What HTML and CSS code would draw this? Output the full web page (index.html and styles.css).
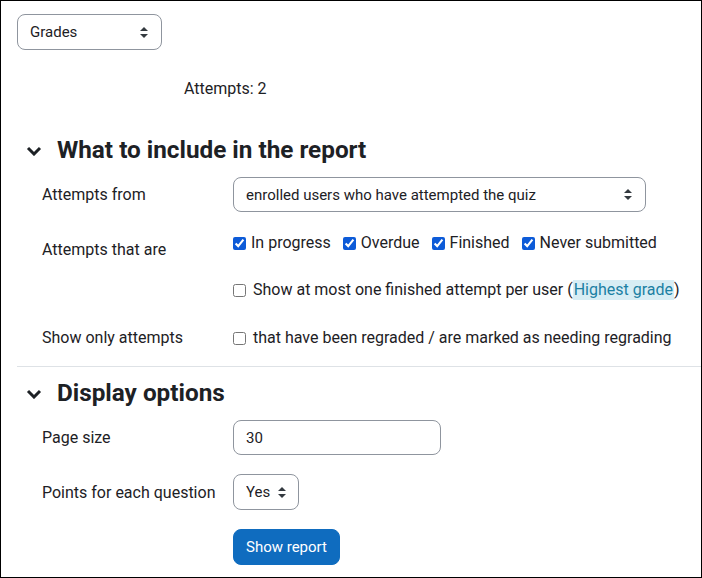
FILE: index.html
```html
<!DOCTYPE html>
<html lang="en">
<head>
  <meta charset="UTF-8">
  <meta name="viewport" content="width=device-width, initial-scale=1.0">
  <title>Quiz report</title>
  <link rel="stylesheet" href="styles.css">
</head>
<body>
  <div class="page">
    <select class="custom-select mode-select">
      <option>Grades</option>
    </select>

    <div class="attempts-count">Attempts: 2</div>

    <fieldset class="section">
      <h3 class="section-title">
        <svg class="chevron" width="16" height="10" viewBox="0 0 16 10"><polyline points="2,2 8,8 14,2" fill="none" stroke="#1d2125" stroke-width="3"/></svg>
        What to include in the report
      </h3>

      <div class="fitem row-from">
        <div class="flabel">Attempts from</div>
        <div class="fcontrol">
          <select class="custom-select wide-select">
            <option>enrolled users who have attempted the quiz</option>
          </select>
        </div>
      </div>

      <div class="fitem row-states">
        <div class="flabel">Attempts that are</div>
        <div class="fcontrol">
          <div class="check-line">
            <label class="check"><input type="checkbox" checked>In progress</label>
            <label class="check"><input type="checkbox" checked>Overdue</label>
            <label class="check"><input type="checkbox" checked>Finished</label>
            <label class="check"><input type="checkbox" checked>Never submitted</label>
          </div>
          <div class="check-line second">
            <label class="check single"><input type="checkbox">Show at most one finished attempt per user (<a href="#" class="grade-link">Highest grade</a>)</label>
          </div>
        </div>
      </div>

      <div class="fitem row-only">
        <div class="flabel">Show only attempts</div>
        <div class="fcontrol">
          <label class="check single"><input type="checkbox">that have been regraded / are marked as needing regrading</label>
        </div>
      </div>
    </fieldset>

    <fieldset class="section display">
      <h3 class="section-title">
        <svg class="chevron" width="16" height="10" viewBox="0 0 16 10"><polyline points="2,2 8,8 14,2" fill="none" stroke="#1d2125" stroke-width="3"/></svg>
        Display options
      </h3>

      <div class="fitem row-pagesize">
        <div class="flabel">Page size</div>
        <div class="fcontrol">
          <input type="text" class="form-control" value="30">
        </div>
      </div>

      <div class="fitem row-points">
        <div class="flabel">Points for each question</div>
        <div class="fcontrol">
          <select class="custom-select small-select">
            <option>Yes</option>
          </select>
        </div>
      </div>

      <div class="fitem row-submit">
        <div class="flabel"></div>
        <div class="fcontrol">
          <button class="btn-primary">Show report</button>
        </div>
      </div>
    </fieldset>
  </div>
</body>
</html>
```

FILE: styles.css
```css
html, body {
  margin: 0;
  padding: 0;
}

body {
  font-family: Roboto, "Liberation Sans", sans-serif;
  font-size: 16px;
  color: #1d2125;
  background: #fff;
}

.page {
  box-sizing: border-box;
  width: 702px;
  height: 578px;
  border: 1px solid #000;
  padding: 13px 0 0 16px;
  overflow: hidden;
}

/* Selects */
.custom-select {
  -webkit-appearance: none;
  appearance: none;
  box-sizing: border-box;
  height: 36px;
  font-family: inherit;
  font-size: 15px;
  color: #1d2125;
  background-color: #fff;
  background-image: url("data:image/svg+xml,%3Csvg xmlns='http://www.w3.org/2000/svg' width='8' height='11' viewBox='0 0 8 11'%3E%3Cpath d='M4 0L8 4H0z M4 11L0 7H8z' fill='%23343a40'/%3E%3C/svg%3E");
  background-repeat: no-repeat;
  background-position: right 13px center;
  background-size: 8px 11px;
  border: 1px solid #8f959e;
  border-radius: 8px;
  padding: 0 30px 0 12px;
  display: block;
}

.mode-select {
  width: 145px;
}

.wide-select {
  width: 413px;
  height: 35px;
}

.small-select {
  width: 66px;
  padding-right: 20px;
  background-position: right 12px center;
}

.attempts-count {
  margin: 27px 0 0 167px;
  line-height: 24px;
}

/* Sections */
.section {
  border: 0;
  margin: 0;
  padding: 0;
}

.section-title {
  display: flex;
  align-items: center;
  margin: 35px 0 0 0;
  font-size: 24.3px;
  font-weight: 700;
  line-height: 28px;
  color: #1d2125;
}

.chevron {
  margin: 1px 15px 0 9px;
}

.display {
  border-top: 1px solid #dee2e6;
  margin-top: 16px;
}

.display .section-title {
  margin-top: 12px;
}

/* Form rows */
.fitem {
  display: flex;
  padding-left: 25px;
}

.flabel {
  width: 191px;
  flex-shrink: 0;
}

.row-from {
  margin-top: 13px;
  align-items: center;
}

.row-states {
  margin-top: 19px;
}

.row-states .flabel {
  padding-top: 7px;
  line-height: 24px;
}

.check-line {
  display: flex;
  gap: 12px;
  line-height: 24px;
}

.check-line.second {
  margin-top: 23px;
}

.check {
  display: flex;
  align-items: center;
  white-space: nowrap;
  line-height: 24px;
}

.check input {
  margin: 0 5px 0 0;
  width: 13px;
  height: 13px;
  accent-color: #0d5bd8;
}

.check.single input {
  margin-right: 7px;
}

.grade-link {
  color: #1b80a3;
  background: #d7edf4;
  text-decoration: none;
  padding: 0 1px;
  line-height: 20px;
}

.row-only {
  margin-top: 24px;
  line-height: 24px;
}

.row-pagesize {
  margin-top: 13px;
  align-items: center;
}

.form-control {
  box-sizing: border-box;
  width: 208px;
  height: 35px;
  font-family: inherit;
  font-size: 15px;
  color: #1d2125;
  border: 1px solid #8f959e;
  border-radius: 8px;
  padding: 0 12px;
}

.row-points {
  margin-top: 19px;
  align-items: center;
}

.row-submit {
  margin-top: 19px;
}

.btn-primary {
  box-sizing: border-box;
  height: 36px;
  padding: 0 12px;
  font-family: inherit;
  font-size: 15px;
  color: #fff;
  background: #0f6cbf;
  border: 1px solid #0f6cbf;
  border-radius: 8px;
  cursor: pointer;
}
```
